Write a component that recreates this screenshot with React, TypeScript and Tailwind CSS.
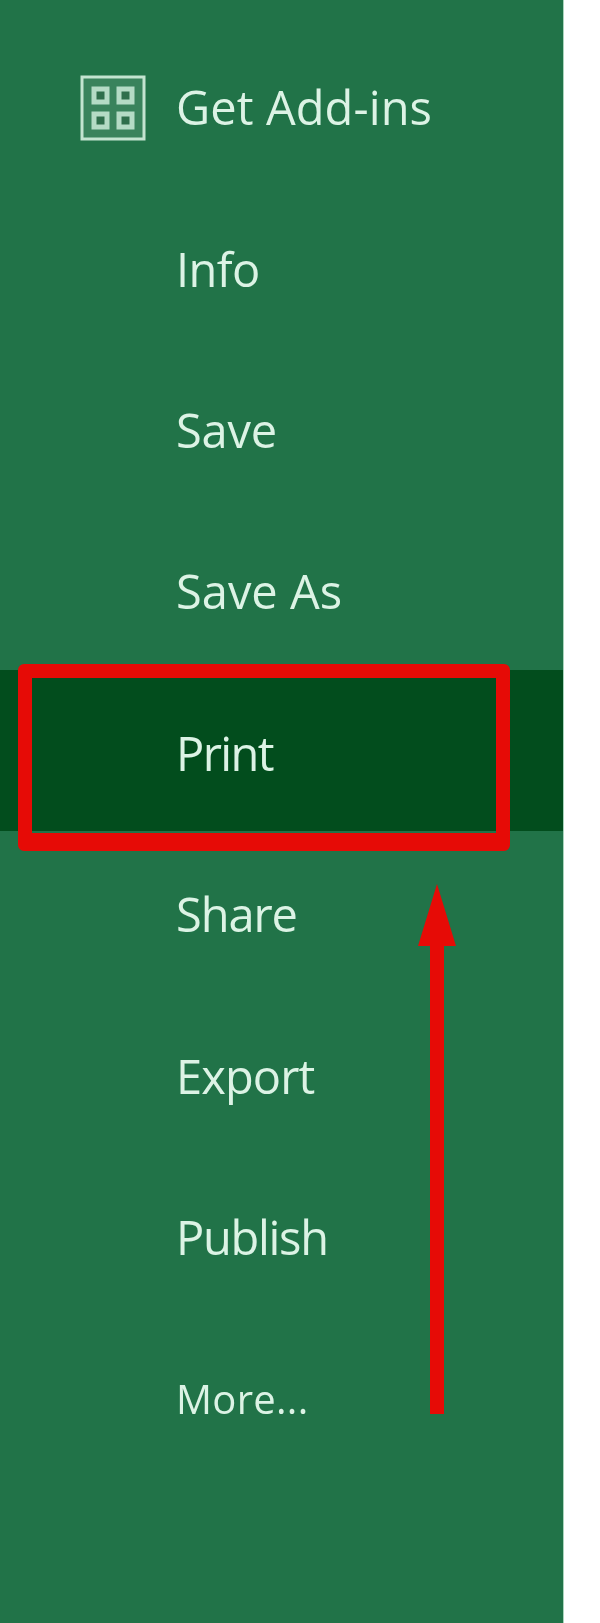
import * as React from "react"

const items = [
  { label: "Info", tracking: "tracking-[-0.6px]" },
  { label: "Save", tracking: "tracking-[-0.2px]" },
  { label: "Save As", tracking: "tracking-normal" },
  { label: "Print", tracking: "tracking-[-1.6px]" },
  { label: "Share", tracking: "tracking-[-1.1px]" },
  { label: "Export", tracking: "tracking-[-0.9px]" },
  { label: "Publish", tracking: "tracking-[-1.3px]" },
]

function AddInsIcon() {
  return (
    <svg className="absolute left-[80px] top-1/2 h-[66px] w-[66px] -translate-y-1/2" viewBox="0 0 66 66" fill="none">
      <rect x="2" y="2" width="62" height="62" stroke="#c3e4d0" strokeWidth="3" fill="#4a8d6a" fillOpacity="0.6" />
      <rect x="14" y="14" width="13" height="13" stroke="#b4dbc5" strokeWidth="5" fill="#2f6f4c" />
      <rect x="39" y="14" width="13" height="13" stroke="#b4dbc5" strokeWidth="5" fill="#2f6f4c" />
      <rect x="14" y="39" width="13" height="13" stroke="#b4dbc5" strokeWidth="5" fill="#2f6f4c" />
      <rect x="39" y="39" width="13" height="13" stroke="#b4dbc5" strokeWidth="5" fill="#2f6f4c" />
    </svg>
  )
}

function Arrow() {
  return (
    <svg className="absolute left-[416px] top-[884px] h-[530px] w-[42px]" viewBox="0 0 42 530" fill="none">
      <path d="M21 0 L40 62 L28 62 L28 530 L14 530 L14 62 L2 62 Z" fill="#e60b06" />
    </svg>
  )
}

function Row({ label, tracking, active }: { label: string; tracking: string; active?: boolean }) {
  return (
    <div className={`flex h-[161.4px] items-center pl-[176px] ${active ? "-mt-[3px] mb-[3px] bg-[#024d1d] pt-[6px]" : ""}`}>
      <span className={`text-[47px] ${tracking}`}>{label}</span>
    </div>
  )
}

export default function App() {
  return (
    <div className="relative h-[1623px] w-[600px] overflow-hidden bg-white font-['Open_Sans',sans-serif] blur-[0.6px]">
      <div className="h-full w-[564px] border-r border-[#a9d5bd] bg-[#217348] pt-[27px] leading-none text-[#dcf3e5]">
        <div className="relative">
          <AddInsIcon />
          <Row label="Get Add-ins" tracking="tracking-[0.1px]" />
        </div>
        {items.map((item) => (
          <Row key={item.label} label={item.label} tracking={item.tracking} active={item.label === "Print"} />
        ))}
        <div className="flex h-[161.4px] items-center pl-[176px]">
          <span className="text-[40px] tracking-[0.3px]">More...</span>
        </div>
      </div>
      <div className="absolute left-[18px] top-[664px] h-[187px] w-[492px] rounded-[6px] border-[14px] border-b-[18px] border-[#e60b06]" />
      <Arrow />
    </div>
  )
}
